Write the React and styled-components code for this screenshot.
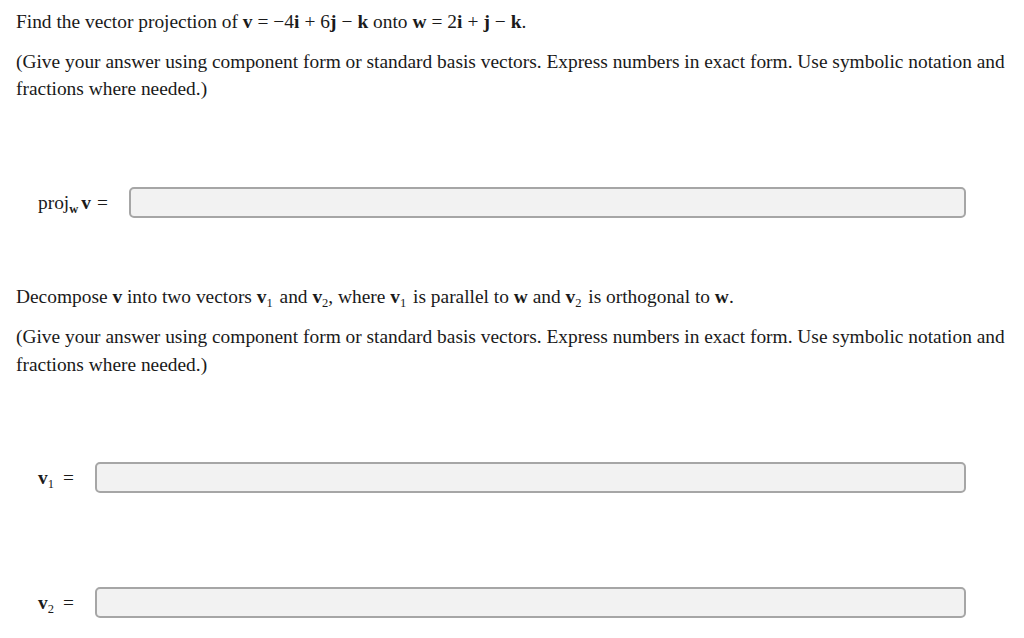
import React from "react";
import styled, { createGlobalStyle } from "styled-components";

const GlobalStyle = createGlobalStyle`
  body {
    margin: 0;
    background: #fff;
    font-family: "Liberation Serif", "Times New Roman", serif;
    color: #1a1a1a;
  }
`;

const Page = styled.div`
  width: 1024px;
  height: 638px;
  padding: 8px 16px 0 16px;
  box-sizing: border-box;
  overflow: hidden;
`;

const Para = styled.p`
  margin: 0 0 ${(p) => p.gap || 11}px 0;
  font-size: 19.4px;
  line-height: 27.5px;
`;

const B = styled.b`
  font-weight: bold;
`;

const Op = styled.span`
  padding: 0 5px;
`;

const Sub = styled.sub`
  font-size: 12.5px;
  line-height: 0;
  vertical-align: -4px;
  margin-right: ${(p) => p.space || 0}px;
  font-weight: ${(p) => (p.bold ? "bold" : "normal")};
`;

const AnswerRow = styled.div`
  display: flex;
  align-items: center;
  padding-left: 22px;
  margin-bottom: ${(p) => p.gap || 0}px;
  width: 950px;
  box-sizing: border-box;
`;

const Label = styled.span`
  font-size: 19.4px;
  line-height: 31px;
  margin-right: ${(p) => p.space || 18}px;
  white-space: nowrap;
`;

const Eq = styled.span`
  margin-left: ${(p) => p.space || 6}px;
`;

const Input = styled.div`
  flex: 1;
  height: 31px;
  box-sizing: border-box;
  border: 2px solid #a6a6a6;
  border-radius: 5px;
  background: #f2f2f2;
`;

const App = () => {
  return (
    <Page>
      <GlobalStyle />
      <Para gap={12}>
        Find the vector projection of <B>v</B>
        <Op>=</Op>−4<B>i</B>
        <Op>+</Op>6<B>j</B>
        <Op>−</Op>
        <B>k</B> onto <B>w</B>
        <Op>=</Op>2<B>i</B>
        <Op>+</Op>
        <B>j</B>
        <Op>−</Op>
        <B>k</B>.
      </Para>
      <Para gap={84}>
        (Give your answer using component form or standard basis vectors. Express numbers in
        exact form. Use symbolic notation and fractions where needed.)
      </Para>
      <AnswerRow gap={65}>
        <Label space={21}>
          proj<Sub bold space={3}>w</Sub>
          <B>v</B>
          <Eq>=</Eq>
        </Label>
        <Input />
      </AnswerRow>
      <Para gap={13}>
        Decompose <B>v</B> into two vectors <B>v</B>
        <Sub space={2}>1</Sub> and <B>v</B>
        <Sub>2</Sub>, where <B>v</B>
        <Sub space={2}>1</Sub> is parallel to <B>w</B> and <B>v</B>
        <Sub space={2}>2</Sub> is orthogonal to <B>w</B>.
      </Para>
      <Para gap={84}>
        (Give your answer using component form or standard basis vectors. Express numbers in
        exact form. Use symbolic notation and fractions where needed.)
      </Para>
      <AnswerRow gap={94}>
        <Label space={21}>
          <B>v</B>
          <Sub>1</Sub>
          <Eq space={9}>=</Eq>
        </Label>
        <Input />
      </AnswerRow>
      <AnswerRow>
        <Label space={21}>
          <B>v</B>
          <Sub>2</Sub>
          <Eq space={9}>=</Eq>
        </Label>
        <Input />
      </AnswerRow>
    </Page>
  );
};

export default App;
